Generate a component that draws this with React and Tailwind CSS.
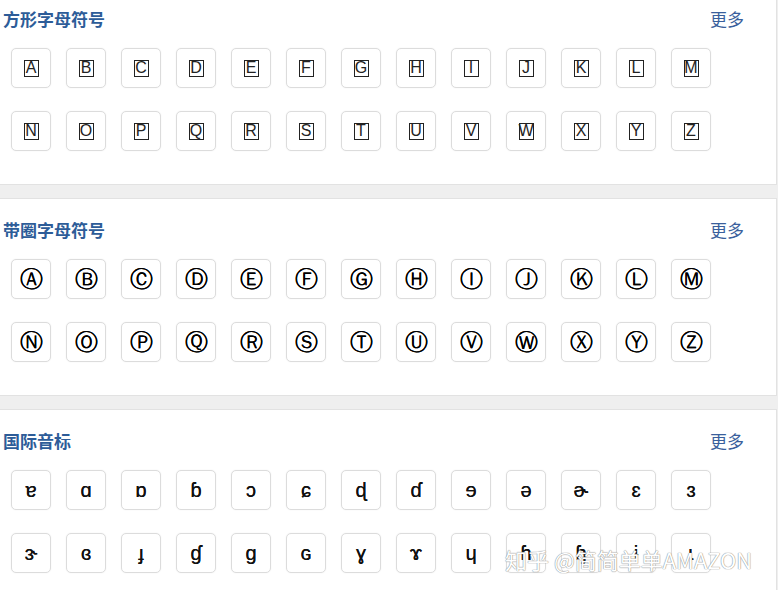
import React from 'react';

const latin = 'ABCDEFGHIJKLMNOPQRSTUVWXYZ'.split('');
const circled = latin.map((c, i) => String.fromCodePoint(0x24b6 + i));
const ipa = [
  'ɐ', 'ɑ', 'ɒ', 'ɓ', 'ɔ', 'ɕ', 'ɖ', 'ɗ', 'ɘ', 'ə', 'ɚ', 'ɛ', 'ɜ',
  'ɝ', 'ɞ', 'ɟ', 'ɠ', 'ɡ', 'ɢ', 'ɣ', 'ɤ', 'ɥ', 'ɦ', 'ɧ', 'ɨ', 'ɩ',
];

function Tile({ children }) {
  return (
    <div className="w-10 h-10 flex items-center justify-center rounded-[5px] border border-[#dcdcdc] bg-white shadow-[0_0_2px_rgba(0,0,0,0.06)]">
      {children}
    </div>
  );
}

// 一组符号卡片
function Card({ title, items, render, first }) {
  return (
    <section
      className={`-ml-2 mr-px bg-white border border-[#e2e2e2] pt-[21px] pb-[33px] ${first ? '-mt-[13px]' : 'mt-[13px]'}`}
    >
      <div className="flex items-center justify-between pl-[10px] pr-[32px] h-5">
        <h2 className="text-[17px] font-bold text-[#2d5c98] leading-5 [font-family:'Noto_Sans_CJK_SC',sans-serif]">
          {title}
        </h2>
        <a className="text-[17px] text-[#3a5f9c] leading-5 [font-family:'Noto_Sans_CJK_SC',sans-serif]">更多</a>
      </div>
      <div className="mt-[19px] pl-[18px] grid grid-cols-[repeat(13,40px)] gap-x-[15px] gap-y-[23px]">
        {items.map((c) => (
          <Tile key={c}>{render(c)}</Tile>
        ))}
      </div>
    </section>
  );
}

export default function App() {
  return (
    <div className="relative w-[778px] h-[590px] overflow-hidden bg-[#efefef]">
      <Card
        first
        title="方形字母符号"
        items={latin}
        render={(c) => (
          <span className="flex items-center justify-center w-[15px] h-[17px] border border-[#222] text-[16px] leading-none text-[#222] [font-family:'Liberation_Sans',sans-serif]">
            {c}
          </span>
        )}
      />
      <Card
        title="带圈字母符号"
        items={circled}
        render={(c) => (
          <span className="text-[23px] leading-none text-black [font-family:'DejaVu_Sans',sans-serif] [text-shadow:0_0_0.5px_#000]">
            {c}
          </span>
        )}
      />
      <Card
        title="国际音标"
        items={ipa}
        render={(c) => (
          <span className="text-[20px] leading-none text-[#111] [font-family:'Liberation_Sans','DejaVu_Sans',sans-serif] [text-shadow:0_0_0.4px_#111]">
            {c}
          </span>
        )}
      />
      <div className="absolute left-[505px] top-[543px] text-[22px] text-white [font-family:'Noto_Sans_CJK_SC',sans-serif] [text-shadow:0_0_1px_#888,0_0_1px_#888]">
        知乎 @简简单单AMAZON
      </div>
    </div>
  );
}
